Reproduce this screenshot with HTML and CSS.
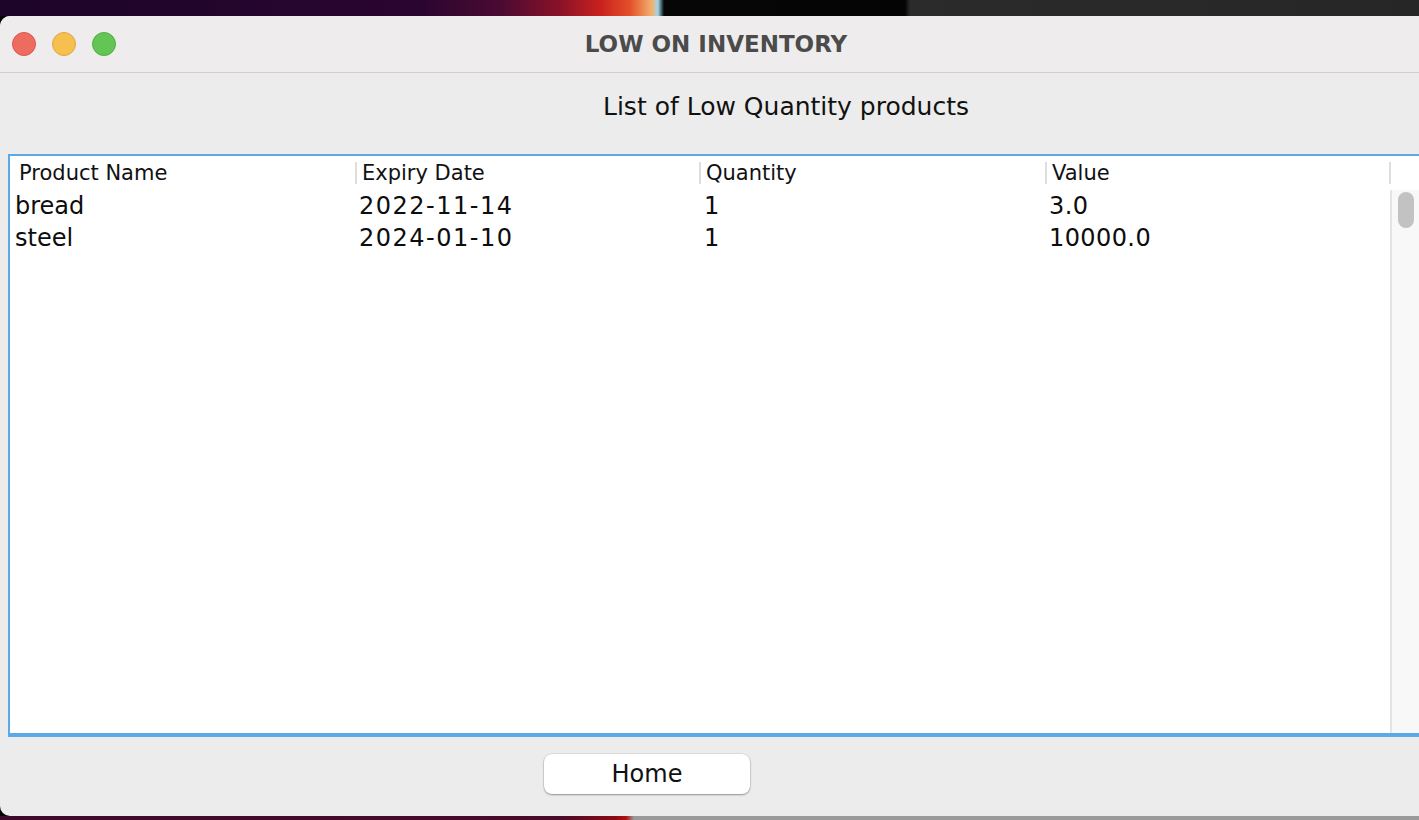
FILE: index.html
```html
<!DOCTYPE html>
<html>
<head>
<meta charset="utf-8">
<title>LOW ON INVENTORY</title>
<link rel="stylesheet" href="styles.css">
</head>
<body>
<div class="desktop-top"></div>
<div class="window">
  <div class="titlebar">
    <div class="lights">
      <span class="light red"></span>
      <span class="light yellow"></span>
      <span class="light green"></span>
    </div>
    <div class="title">LOW ON INVENTORY</div>
  </div>
  <div class="content">
    <div class="heading">List of Low Quantity products</div>
    <div class="table">
      <div class="thead">
        <div class="th first">Product Name</div>
        <div class="th">Expiry Date</div>
        <div class="th">Quantity</div>
        <div class="th">Value</div>
        <div class="th corner"></div>
      </div>
      <div class="tbody">
        <div class="rows">
          <div class="row">
            <div class="td">bread</div>
            <div class="td date">2022-11-14</div>
            <div class="td">1</div>
            <div class="td num">3.0</div>
          </div>
          <div class="row">
            <div class="td">steel</div>
            <div class="td date">2024-01-10</div>
            <div class="td">1</div>
            <div class="td num">10000.0</div>
          </div>
        </div>
        <div class="scrollbar"><div class="thumb"></div></div>
      </div>
    </div>
    <div class="footer">
      <button class="btn">Home</button>
    </div>
  </div>
</div>
<div class="desktop-bottom"></div>
</body>
</html>
```
FILE: styles.css
```css
html, body {
  margin: 0;
  padding: 0;
  width: 1419px;
  height: 820px;
  overflow: hidden;
  background: #050505;
  font-family: "DejaVu Sans", "Liberation Sans", sans-serif;
}

.desktop-top {
  height: 16px;
  background: linear-gradient(90deg,
    #1c0528 0px, #2a0530 420px, #4a0a32 500px, #8a1228 560px,
    #c8201e 600px, #e4502a 630px, #f2b070 652px, #9fd6ea 658px,
    #060606 664px, #040404 905px, #2b2b2b 910px, #262626 1419px);
}

.desktop-bottom {
  height: 4px;
  background: linear-gradient(90deg,
    #3e0a2c 0px, #4a0a2a 560px, #8a0a14 615px, #b01010 626px,
    #9a9a9a 634px, #9a9a9a 1419px);
}

.window {
  width: 1432px;
  height: 800px;
  background: #ececec;
  border-radius: 10px;
  overflow: hidden;
  display: flex;
  flex-direction: column;
}

.titlebar {
  height: 56px;
  flex: none;
  background: #eeeced;
  border-bottom: 1px solid #cfcfcf;
  display: flex;
  align-items: center;
  position: relative;
}

.lights {
  display: flex;
  gap: 16px;
  padding-left: 12px;
}

.light {
  width: 24px;
  height: 24px;
  border-radius: 50%;
  box-sizing: border-box;
}
.light.red { background: #ee6b60; border: 1px solid #d9584f; }
.light.yellow { background: #f6c050; border: 1px solid #dea83c; }
.light.green { background: #62c554; border: 1px solid #52ad45; }

.title {
  position: absolute;
  left: 0;
  right: 0;
  top: 0;
  bottom: 0;
  display: flex;
  align-items: center;
  justify-content: center;
  font-weight: bold;
  font-size: 23px;
  color: #4b4b4b;
  pointer-events: none;
}

.content {
  flex: 1;
  display: flex;
  flex-direction: column;
}

.heading {
  height: 81px;
  box-sizing: border-box;
  padding-top: 19px;
  padding-left: 140px;
  text-align: center;
  font-size: 25px;
  line-height: 30px;
  color: #111;
}

.table {
  margin: 0 8px;
  height: 583px;
  box-sizing: border-box;
  border: 2px solid #5aaae8;
  border-bottom: 4px solid #5aaae8;
  background: #fff;
  display: flex;
  flex-direction: column;
}

.thead {
  height: 34px;
  flex: none;
  display: grid;
  grid-template-columns: 345px 344px 346px 344px 1fr;
  font-size: 21px;
  color: #111;
}

.th {
  position: relative;
  padding-left: 7px;
  line-height: 34px;
  white-space: nowrap;
}
.th.first { padding-left: 9px; }
.th:not(.first)::before {
  content: "";
  position: absolute;
  left: 0;
  top: 6px;
  width: 2px;
  height: 22px;
  background: #dedede;
}

.tbody {
  flex: 1;
  display: flex;
}

.rows {
  flex: 1;
}

.row {
  display: grid;
  grid-template-columns: 345px 344px 346px 344px;
  height: 32px;
  font-size: 24px;
  line-height: 32px;
  color: #0d0d0d;
}

.td {
  padding-left: 5px;
  white-space: nowrap;
}
.td.date { padding-left: 4px; letter-spacing: 1.5px; }
.td.num { padding-left: 4px; letter-spacing: 0.4px; }

.scrollbar {
  width: 32px;
  flex: none;
  background: #f8f8f8;
  border-left: 2px solid #e4e4e4;
  padding: 2px 0 0 6px;
  box-sizing: border-box;
}

.thumb {
  width: 16px;
  height: 36px;
  border-radius: 8px;
  background: #c2c2c2;
}

.footer {
  flex: 1;
  display: flex;
  align-items: flex-start;
  padding-left: 544px;
  padding-top: 17px;
}

.btn {
  width: 206px;
  height: 40px;
  background: #fff;
  border: none;
  border-radius: 8px;
  box-shadow: 0 1px 2px rgba(0,0,0,0.35), 0 0 0 0.5px rgba(0,0,0,0.12);
  font-family: "DejaVu Sans", "Liberation Sans", sans-serif;
  font-size: 24px;
  color: #111;
  padding: 0;
}
```
